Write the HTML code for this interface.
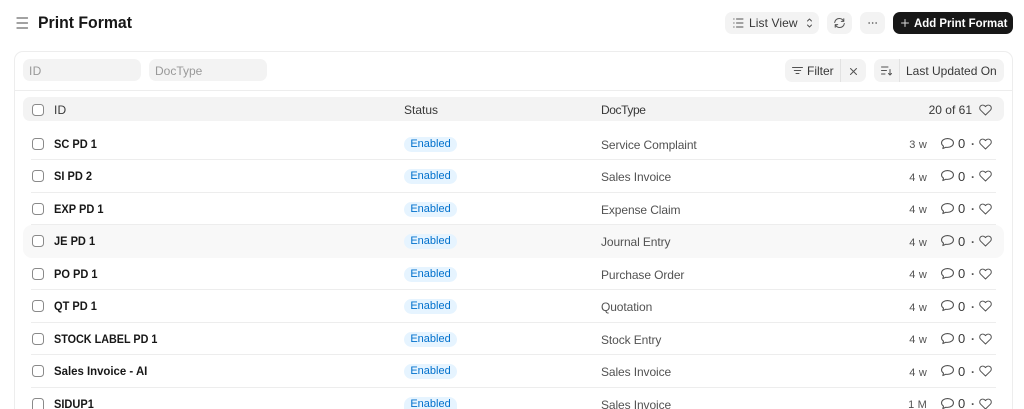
<!DOCTYPE html>
<html><head><meta charset="utf-8"><style>
*{box-sizing:border-box}
html{margin:0;padding:0;width:1024px;height:409px;overflow:hidden;background:#fff}
body{margin:0;padding:0;width:1024px;height:409px;overflow:hidden;background:#fff;position:relative;font-family:"Liberation Sans",sans-serif;color:#383838;font-size:12px}
.a{position:absolute;white-space:nowrap}
.t{line-height:16px;height:16px}
.b{background:#f3f3f3;border-radius:7px}
.id{left:54px;font-weight:bold;color:#171717;font-size:12px;transform:scaleX(.92);transform-origin:left center}
.st{left:404px;width:53px;height:15px;margin-top:1px;border-radius:8px;background:#e6f4ff;color:#0070cc;font-size:11px;line-height:14px;text-align:center}
.dt{left:601px;color:#525252;font-size:12px;letter-spacing:-.1px}
.tm{right:97px;color:#525252;font-size:11px;letter-spacing:.2px}
.z{left:958px;color:#383838;font-size:13px;letter-spacing:.2px}
.dot{left:971px;color:#525252;font-size:12px;font-weight:bold}
.ln{left:31px;width:965px;height:1px;background:#ededed}
.cb{left:31.5px;width:12px;height:12px;border:1px solid #8a8a8a;border-radius:3.5px;background:#fff}
svg{position:absolute;overflow:visible;fill:none;stroke:#525252;stroke-width:1;stroke-linecap:round;stroke-linejoin:round}
.clip{overflow:hidden}
</style></head><body>
<svg style="left:16px;top:16px" width="13" height="14" viewBox="0 0 13 14"><path d="M1 2h10.500M1 7h10.500M1 12h10.500" stroke="#6b6b6b" stroke-width="1.200"/></svg>
<div class="a" style="left:38px;top:12px;font-size:17px;line-height:22px;font-weight:bold;color:#171717;transform:scaleX(.93);transform-origin:left center">Print Format</div>

<div class="a b" style="left:725px;top:12px;width:94px;height:22px"></div>
<svg style="left:733px;top:18px" width="11" height="10" viewBox="0 0 11 10"><path d="M3.500 1H10M3.500 5H10M3.500 9H10M.7 1h.4M.7 5h.4M.7 9h.4"/></svg>
<div class="a t" style="left:749px;top:15px;font-size:12px;letter-spacing:.1px">List View</div>
<svg style="left:806px;top:18px" width="7" height="10" viewBox="0 0 7 10"><path d="M1.500 3 3.500 1l2 2M1.500 7l2 2 2-2"/></svg>
<div class="a b" style="left:827px;top:12px;width:25px;height:22px"></div>
<svg style="left:834px;top:17px" width="11" height="12" viewBox="0 0 11 12"><path d="M.7 5.500C1 3 3 1.500 5.300 1.500c2 0 3.500 1 4.200 2.700M10.300 6.500C10 9 8 10.500 5.700 10.500c-2 0-3.500-1-4.200-2.700M9.800 1.800v2.600H7.300M1.200 10.200V7.600h2.500"/></svg>
<div class="a b" style="left:860px;top:12px;width:25px;height:22px"></div>
<svg style="left:868px;top:22px" width="10" height="2" viewBox="0 0 10 2"><path d="M1 1h.3M4.500 1h.3M8 1h.3" stroke-width="1.300" stroke="#383838"/></svg>
<div class="a" style="left:893px;top:12px;width:120px;height:22px;background:#171717;border-radius:7px"></div>
<svg style="left:901px;top:19px" width="8" height="8" viewBox="0 0 8 8"><path d="M4 .5v7M.5 4h7" stroke="#d8d8d8"/></svg>
<div class="a t" style="left:914px;top:15px;color:#fff;font-size:12px;font-weight:bold;transform:scaleX(.953);transform-origin:left center">Add Print Format</div>

<div class="a" style="left:14px;top:51px;width:999px;height:358px;border:1px solid #ededed;border-bottom:0;border-radius:9px 9px 0 0"></div>
<div class="a b" style="left:23px;top:59px;width:118px;height:22px"></div>
<div class="a t" style="left:29px;top:63px;color:#999;font-size:12px;letter-spacing:.3px">ID</div>
<div class="a b" style="left:149px;top:59px;width:118px;height:22px"></div>
<div class="a t" style="left:155px;top:63px;color:#999;font-size:12px">DocType</div>

<div class="a b" style="left:785px;top:59px;width:81px;height:23px"></div>
<div class="a" style="left:840px;top:59px;width:1px;height:23px;background:#e2e2e2"></div>
<svg style="left:792px;top:66px" width="11" height="9" viewBox="0 0 11 9"><path d="M.5 1.500h10M2.300 4.500h6.400M4 7.500h3"/></svg>
<div class="a t" style="left:807px;top:63px;font-size:12px">Filter</div>
<svg style="left:850px;top:68px" width="7" height="7" viewBox="0 0 7 7"><path d="M.5.500l6 6M6.500.500l-6 6"/></svg>
<div class="a b" style="left:874px;top:59px;width:130px;height:23px"></div>
<div class="a" style="left:899px;top:59px;width:1px;height:23px;background:#e2e2e2"></div>
<svg style="left:881px;top:66px" width="11" height="10" viewBox="0 0 11 10"><path d="M.5 1h6.500M.5 4.500h5M.5 8h3.500M9 3.500V9M7.500 7.500 9 9l1.500-1.500"/></svg>
<div class="a t" style="left:906px;top:63px;font-size:12px">Last Updated On</div>
<div class="a" style="left:15px;top:90px;width:997px;height:1px;background:#ededed"></div>

<div class="a b" style="left:23px;top:97px;width:981px;height:24px"></div>
<div class="a cb" style="top:103.5px"></div>
<div class="a t" style="left:54px;top:102px;letter-spacing:.2px">ID</div>
<div class="a t" style="left:404px;top:102px">Status</div>
<div class="a t" style="left:601px;top:102px;letter-spacing:-.4px">DocType</div>
<div class="a t" style="right:52px;top:102px">20 of 61</div>
<svg style="left:979px;top:104px" width="13" height="12" viewBox="0 0 13 12"><path d="M6.500 11 1.600 6.200C.4 5 .4 3 1.600 1.900c1.200-1.100 3-1.100 4.200 0l.7.700.7-.7c1.200-1.100 3-1.100 4.200 0 1.200 1.100 1.200 3.100 0 4.300z"/></svg>

<div class="a" style="left:23px;top:225px;width:981px;height:33px;background:#f8f8f8;border-radius:9px"></div>

<div class="a ln" style="top:159px"></div><div class="a ln" style="top:192px"></div>
<div class="a ln" style="top:224px"></div><div class="a ln" style="top:289px"></div>
<div class="a ln" style="top:322px"></div><div class="a ln" style="top:354px"></div><div class="a ln" style="top:387px"></div>

<div class="a cb" style="top:138px"></div><div class="a t id" style="top:136px">SC PD 1</div><div class="a st" style="top:136px">Enabled</div><div class="a t dt" style="top:137px">Service Complaint</div><div class="a t tm" style="top:137px">3 w</div><svg style="left:941px;top:138px" width="13" height="12" viewBox=".5 .5 12 11"><path d="M6.500 1C3.400 1 1 2.800 1 5c0 1.200.7 2.200 1.800 3l-.6 2.200L5 9c.5.100 1 .1 1.500.1 3.100 0 5.500-1.800 5.500-4.100S9.600 1 6.500 1z"/></svg><div class="a t z" style="top:136px">0</div><div class="a t dot" style="top:136px">·</div><svg style="left:979px;top:138px" width="13" height="12" viewBox="0 0 13 12"><path d="M6.500 11 1.600 6.200C.4 5 .4 3 1.600 1.900c1.200-1.100 3-1.100 4.200 0l.7.700.7-.7c1.200-1.100 3-1.100 4.200 0 1.200 1.100 1.200 3.100 0 4.300z"/></svg>

<div class="a cb" style="top:170px"></div><div class="a t id" style="top:168px">SI PD 2</div><div class="a st" style="top:168px">Enabled</div><div class="a t dt" style="top:169px">Sales Invoice</div><div class="a t tm" style="top:170px">4 w</div><svg style="left:941px;top:170px" width="13" height="12" viewBox=".5 .5 12 11"><path d="M6.500 1C3.400 1 1 2.800 1 5c0 1.200.7 2.200 1.800 3l-.6 2.200L5 9c.5.100 1 .1 1.500.1 3.100 0 5.500-1.800 5.500-4.100S9.600 1 6.500 1z"/></svg><div class="a t z" style="top:169px">0</div><div class="a t dot" style="top:169px">·</div><svg style="left:979px;top:170px" width="13" height="12" viewBox="0 0 13 12"><path d="M6.500 11 1.600 6.200C.4 5 .4 3 1.600 1.900c1.200-1.100 3-1.100 4.200 0l.7.700.7-.7c1.200-1.100 3-1.100 4.200 0 1.200 1.100 1.200 3.100 0 4.300z"/></svg>

<div class="a cb" style="top:203px"></div><div class="a t id" style="top:201px">EXP PD 1</div><div class="a st" style="top:201px">Enabled</div><div class="a t dt" style="top:202px">Expense Claim</div><div class="a t tm" style="top:202px">4 w</div><svg style="left:941px;top:203px" width="13" height="12" viewBox=".5 .5 12 11"><path d="M6.500 1C3.400 1 1 2.800 1 5c0 1.200.7 2.200 1.800 3l-.6 2.200L5 9c.5.100 1 .1 1.500.1 3.100 0 5.500-1.800 5.500-4.100S9.600 1 6.500 1z"/></svg><div class="a t z" style="top:201px">0</div><div class="a t dot" style="top:201px">·</div><svg style="left:979px;top:203px" width="13" height="12" viewBox="0 0 13 12"><path d="M6.500 11 1.600 6.200C.4 5 .4 3 1.600 1.900c1.200-1.100 3-1.100 4.200 0l.7.700.7-.7c1.200-1.100 3-1.100 4.200 0 1.200 1.100 1.200 3.100 0 4.300z"/></svg>

<div class="a cb" style="top:235px"></div><div class="a t id" style="top:233px">JE PD 1</div><div class="a st" style="top:233px">Enabled</div><div class="a t dt" style="top:234px">Journal Entry</div><div class="a t tm" style="top:235px">4 w</div><svg style="left:941px;top:235px" width="13" height="12" viewBox=".5 .5 12 11"><path d="M6.500 1C3.400 1 1 2.800 1 5c0 1.200.7 2.200 1.800 3l-.6 2.200L5 9c.5.100 1 .1 1.500.1 3.100 0 5.500-1.800 5.500-4.100S9.600 1 6.500 1z"/></svg><div class="a t z" style="top:234px">0</div><div class="a t dot" style="top:234px">·</div><svg style="left:979px;top:235px" width="13" height="12" viewBox="0 0 13 12"><path d="M6.500 11 1.600 6.200C.4 5 .4 3 1.600 1.900c1.200-1.100 3-1.100 4.200 0l.7.700.7-.7c1.200-1.100 3-1.100 4.200 0 1.200 1.100 1.200 3.100 0 4.300z"/></svg>

<div class="a cb" style="top:268px"></div><div class="a t id" style="top:266px">PO PD 1</div><div class="a st" style="top:266px">Enabled</div><div class="a t dt" style="top:267px">Purchase Order</div><div class="a t tm" style="top:267px">4 w</div><svg style="left:941px;top:268px" width="13" height="12" viewBox=".5 .5 12 11"><path d="M6.500 1C3.400 1 1 2.800 1 5c0 1.200.7 2.200 1.800 3l-.6 2.200L5 9c.5.100 1 .1 1.500.1 3.100 0 5.500-1.800 5.500-4.100S9.600 1 6.500 1z"/></svg><div class="a t z" style="top:266px">0</div><div class="a t dot" style="top:266px">·</div><svg style="left:979px;top:268px" width="13" height="12" viewBox="0 0 13 12"><path d="M6.500 11 1.600 6.200C.4 5 .4 3 1.600 1.900c1.200-1.100 3-1.100 4.200 0l.7.700.7-.7c1.200-1.100 3-1.100 4.200 0 1.200 1.100 1.200 3.100 0 4.300z"/></svg>

<div class="a cb" style="top:300px"></div><div class="a t id" style="top:298px">QT PD 1</div><div class="a st" style="top:298px">Enabled</div><div class="a t dt" style="top:299px">Quotation</div><div class="a t tm" style="top:300px">4 w</div><svg style="left:941px;top:300px" width="13" height="12" viewBox=".5 .5 12 11"><path d="M6.500 1C3.400 1 1 2.800 1 5c0 1.200.7 2.200 1.800 3l-.6 2.200L5 9c.5.100 1 .1 1.500.1 3.100 0 5.500-1.800 5.500-4.100S9.600 1 6.500 1z"/></svg><div class="a t z" style="top:299px">0</div><div class="a t dot" style="top:299px">·</div><svg style="left:979px;top:300px" width="13" height="12" viewBox="0 0 13 12"><path d="M6.500 11 1.600 6.200C.4 5 .4 3 1.600 1.900c1.200-1.100 3-1.100 4.200 0l.7.700.7-.7c1.200-1.100 3-1.100 4.200 0 1.200 1.100 1.200 3.100 0 4.300z"/></svg>

<div class="a cb" style="top:333px"></div><div class="a t id" style="top:331px;transform:scaleX(.9)">STOCK LABEL PD 1</div><div class="a st" style="top:331px">Enabled</div><div class="a t dt" style="top:332px">Stock Entry</div><div class="a t tm" style="top:332px">4 w</div><svg style="left:941px;top:333px" width="13" height="12" viewBox=".5 .5 12 11"><path d="M6.500 1C3.400 1 1 2.800 1 5c0 1.200.7 2.200 1.800 3l-.6 2.200L5 9c.5.100 1 .1 1.500.1 3.100 0 5.500-1.800 5.500-4.100S9.600 1 6.500 1z"/></svg><div class="a t z" style="top:331px">0</div><div class="a t dot" style="top:331px">·</div><svg style="left:979px;top:333px" width="13" height="12" viewBox="0 0 13 12"><path d="M6.500 11 1.600 6.200C.4 5 .4 3 1.600 1.900c1.200-1.100 3-1.100 4.200 0l.7.700.7-.7c1.200-1.100 3-1.100 4.200 0 1.200 1.100 1.200 3.100 0 4.300z"/></svg>

<div class="a cb" style="top:365px"></div><div class="a t id" style="top:363px;transform:scaleX(.95)">Sales Invoice - AI</div><div class="a st" style="top:363px">Enabled</div><div class="a t dt" style="top:364px">Sales Invoice</div><div class="a t tm" style="top:365px">4 w</div><svg style="left:941px;top:365px" width="13" height="12" viewBox=".5 .5 12 11"><path d="M6.500 1C3.400 1 1 2.800 1 5c0 1.200.7 2.200 1.800 3l-.6 2.200L5 9c.5.100 1 .1 1.500.1 3.100 0 5.500-1.800 5.500-4.100S9.600 1 6.500 1z"/></svg><div class="a t z" style="top:364px">0</div><div class="a t dot" style="top:364px">·</div><svg style="left:979px;top:365px" width="13" height="12" viewBox="0 0 13 12"><path d="M6.500 11 1.600 6.200C.4 5 .4 3 1.600 1.900c1.200-1.100 3-1.100 4.200 0l.7.700.7-.7c1.200-1.100 3-1.100 4.200 0 1.200 1.100 1.200 3.100 0 4.300z"/></svg>

<div class="a cb" style="top:398px;height:11px;border-bottom:0;border-radius:3.5px 3.5px 0 0"></div><div class="a t id clip" style="top:396px;height:13px">SIDUP1</div><div class="a st clip" style="top:396px;height:12px;border-radius:8px 8px 0 0">Enabled</div><div class="a t dt clip" style="top:397px;height:12px">Sales Invoice</div><div class="a t tm clip" style="top:397px;height:12px">1 M</div><svg style="left:941px;top:398px;overflow:hidden" width="13" height="11" viewBox=".5 .5 12 10.080"><path d="M6.500 1C3.400 1 1 2.800 1 5c0 1.200.7 2.200 1.800 3l-.6 2.200L5 9c.5.100 1 .1 1.500.1 3.100 0 5.500-1.800 5.500-4.100S9.600 1 6.500 1z"/></svg><div class="a t z clip" style="top:396px;height:13px">0</div><div class="a t dot clip" style="top:396px;height:13px">·</div><svg style="left:979px;top:398px;overflow:hidden" width="13" height="11" viewBox="0 0 13 11"><path d="M6.500 11 1.600 6.200C.4 5 .4 3 1.600 1.900c1.200-1.100 3-1.100 4.200 0l.7.700.7-.7c1.200-1.100 3-1.100 4.200 0 1.200 1.100 1.200 3.100 0 4.300z"/></svg>
</body></html>
